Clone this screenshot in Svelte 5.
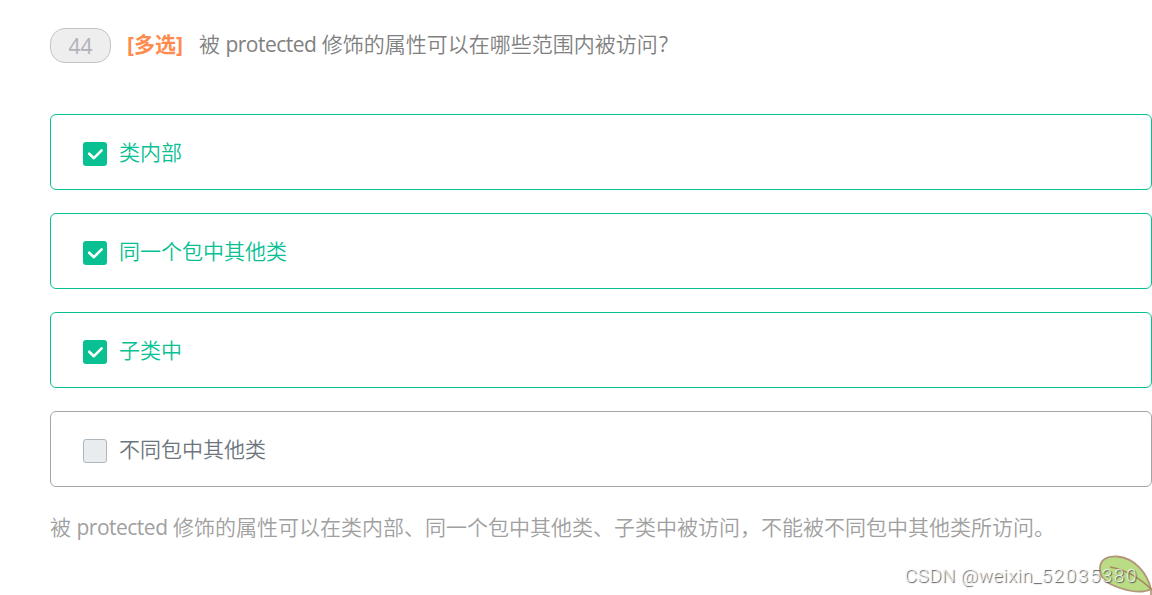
<script lang="ts">
  let questionNumber: number = 44;

  let options = [
    { text: '类内部', checked: true },
    { text: '同一个包中其他类', checked: true },
    { text: '子类中', checked: true },
    { text: '不同包中其他类', checked: false }
  ];
</script>

<main>
  <header>
    <span class="number">{questionNumber}</span>
    <span class="type">[多选]</span>
    <h1>被 <span class="latin">protected</span> 修饰的属性可以在哪些范围内被访问<span class="mark">?</span></h1>
  </header>

  <div class="options">
    {#each options as option}
      <label class="option" class:checked={option.checked}>
        <input type="checkbox" bind:checked={option.checked}>
        <span class="box">
          {#if option.checked}
            <svg viewBox="0 0 24 24" width="24" height="24">
              <path d="M6.2 11.7 L10.9 16.2 L18.6 8.4" />
            </svg>
          {/if}
        </span>
        <span class="text">{option.text}</span>
      </label>
    {/each}
  </div>

  <p class="explain">被 <span class="latin">protected</span> 修饰的属性可以在类内部、同一个包中其他类、子类中被访问，不能被不同包中其他类所访问。</p>

  <svg class="leaf" viewBox="0 0 60 50" width="60" height="50">
    <path class="blade" d="M8 23 C8 15 15 11 25 11.5 C43 13 55 28 59 44 C52 48 40 47 28 43 C15 39 7 33 8 23 Z" />
    <path class="vein" d="M18 22 C34 25 48 33 60 45" />
    <path class="vein" d="M59 44 V50" />
  </svg>
  <div class="watermark">CSDN @weixin_<span class="digits">52035380</span></div>
</main>

<style>
  :global(body) {
    background-color: #fff;
    overflow: hidden;
  }

  main {
    position: relative;
    box-sizing: border-box;
    width: 100%;
    height: 595px;
    padding: 28px 0 0 50px;
    overflow: hidden;
    font-family: 'Open Sans', 'Noto Sans CJK SC', sans-serif;
    font-size: 21px;
    font-weight: 350;
    line-height: 34px;
  }

  header {
    display: flex;
    align-items: flex-start;
    height: 35px;
    color: #808080;
  }

  .number {
    box-sizing: border-box;
    width: 61px;
    height: 35px;
    border: 1px solid #c4c4c4;
    border-radius: 15px;
    background-color: #eee;
    color: #b3b0b8;
    font-weight: 400;
    line-height: 35px;
    text-align: center;
  }

  .type {
    margin-left: 16px;
    color: #ff8b4e;
    font-weight: 700;
    line-height: 32px;
  }

  h1 {
    margin: 0 0 0 16px;
    font-size: 21px;
    font-weight: inherit;
    line-height: 32px;
    white-space: nowrap;
  }

  .latin {
    font-weight: 380;
    letter-spacing: -0.5px;
  }

  .mark {
    margin-left: 1px;
    font-weight: 400;
  }

  .options {
    display: flex;
    flex-direction: column;
    gap: 23px;
    margin-top: 51px;
  }

  .option {
    display: flex;
    align-items: center;
    box-sizing: border-box;
    height: 76px;
    padding: 2px 32px 0;
    border: 1px solid #a3a5a6;
    border-radius: 6px;
    color: #6c757d;
    cursor: pointer;
  }

  .option.checked {
    border-color: #09c092;
    color: #09c092;
  }

  input {
    position: absolute;
    opacity: 0;
  }

  .box {
    box-sizing: border-box;
    width: 24px;
    height: 24px;
    margin-top: 2px;
    border: 1px solid #adb5bd;
    border-radius: 3px;
    background-color: #e9ecef;
  }

  .checked .box {
    border: none;
    background-color: #09c092;
  }

  .box svg {
    display: block;
    fill: none;
    stroke: #fff;
    stroke-width: 2.6;
    stroke-linecap: round;
    stroke-linejoin: round;
  }

  .text {
    margin: 0 0 2px 12px;
  }

  .explain {
    margin: 23px 0 0;
    color: #a0a0a0;
    white-space: nowrap;
  }

  .leaf {
    position: absolute;
    right: 0;
    bottom: 0;
  }

  .blade {
    fill: #b9dc84;
    stroke: #b39579;
    stroke-width: 1.8;
  }

  .vein {
    fill: none;
    stroke: #a98a5c;
    stroke-width: 1.5;
  }

  .watermark {
    position: absolute;
    right: 14px;
    bottom: 8px;
    color: rgba(255, 255, 255, 0.8);
    font-family: Roboto, sans-serif;
    font-size: 19px;
    font-weight: 300;
    letter-spacing: 0.35px;
    line-height: 22px;
    text-shadow: 1px 1px 1px #555;
    white-space: nowrap;
  }

  .digits {
    letter-spacing: 1.55px;
  }
</style>
